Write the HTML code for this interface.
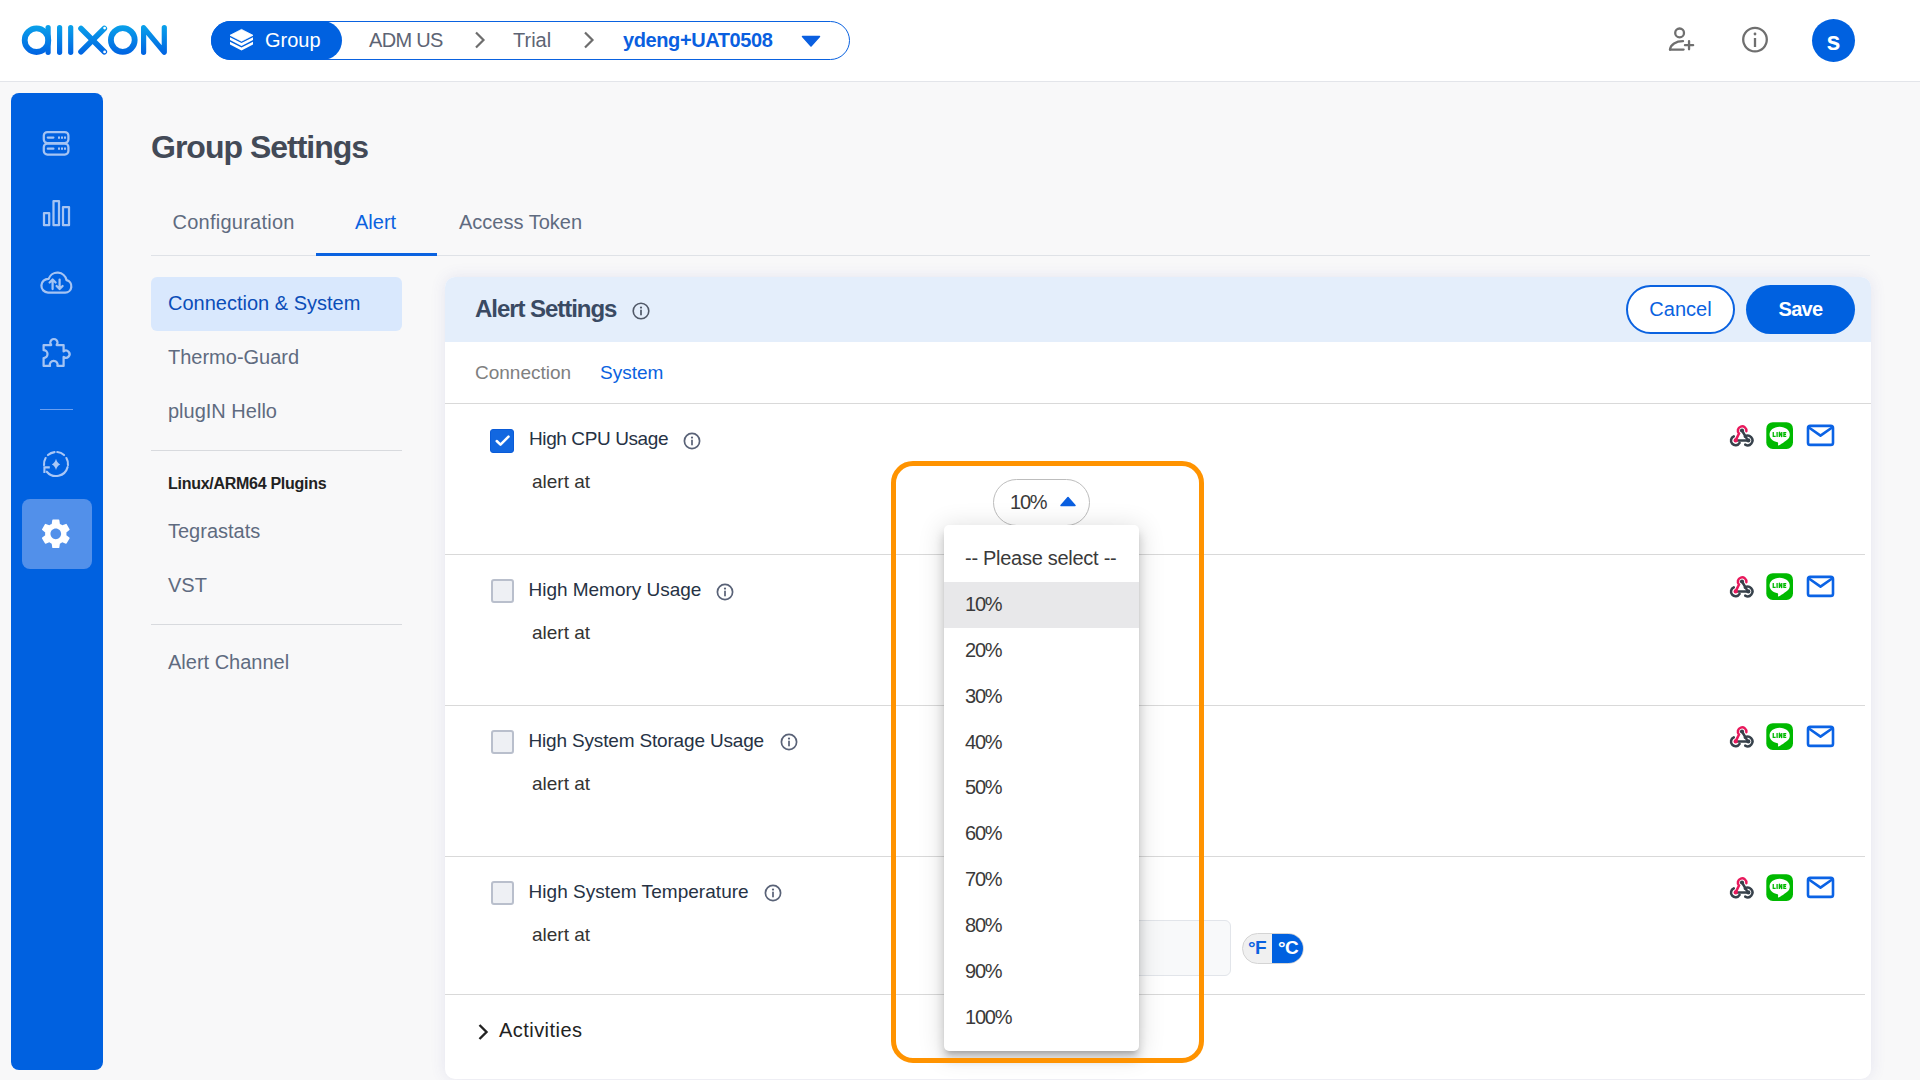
<!DOCTYPE html>
<html><head><meta charset="utf-8">
<style>
*{box-sizing:border-box;margin:0;padding:0}
html,body{width:1920px;height:1080px;overflow:hidden;background:#f8f8f9;font-family:"Liberation Sans",sans-serif;color:#333}
.a{position:absolute;white-space:nowrap}
.hdr{position:absolute;left:0;top:0;width:1920px;height:82px;background:#fff;border-bottom:1px solid #e3e5ea}
.crumb{position:absolute;left:211px;top:21px;width:639px;height:39px;border:1.5px solid #0a62e0;border-radius:20px;background:#fff}
.grp{position:absolute;left:211px;top:21px;width:131px;height:39px;background:#0061e0;border-radius:20px}
.t20{font-size:20px;line-height:24px}
.side{position:absolute;left:11px;top:93px;width:92px;height:977px;background:#0061e0;border-radius:8px}
.card{position:absolute;left:445px;top:277px;width:1426px;height:802px;background:#fff;border-radius:10px;box-shadow:0 0 16px rgba(70,70,160,.11)}
.chd{position:absolute;left:445px;top:277px;width:1426px;height:65px;background:#e4eefb;border-radius:10px 10px 0 0}
.sep{position:absolute;left:445px;width:1420px;height:1px;background:#d9d9d9}
.nav{font-size:20px;line-height:24px;color:#5f6b80}
.ttl{font-size:19px;line-height:24px;color:#263244;letter-spacing:-0.4px}
.alat{font-size:19px;line-height:24px;color:#333;margin-top:1px}
.cb{position:absolute;left:491px;width:23px;height:24px;border-radius:3px;background:#eef0f4;border:2px solid #b9bfcc}
.menu{position:absolute;left:944px;top:525px;width:195px;height:526px;background:#fff;border-radius:5px;box-shadow:0 5px 5px -3px rgba(0,0,0,.2),0 8px 10px 1px rgba(0,0,0,.14),0 3px 24px 3px rgba(0,0,0,.12)}
.mi{position:absolute;left:21px;font-size:20px;line-height:24px;color:#3a3a3a;letter-spacing:-0.28px}
</style></head><body>
<!-- header -->
<div class="hdr"></div>
<svg class="a" style="left:0;top:0" width="180" height="82" viewBox="0 0 180 82">
<defs><linearGradient id="lg" x1="0" y1="25" x2="0" y2="55" gradientUnits="userSpaceOnUse"><stop offset="0" stop-color="#0aa2ea"/><stop offset="1" stop-color="#0062e2"/></linearGradient></defs>
<g fill="none" stroke="url(#lg)" stroke-linecap="round">
<circle cx="36.5" cy="40.2" r="11.8" stroke-width="5.8"/>
<line x1="48.1" y1="27.6" x2="48.1" y2="52.3" stroke-width="5.2"/>
<line x1="59.6" y1="27.6" x2="59.6" y2="52.3" stroke-width="5.2"/>
<line x1="70.7" y1="27.6" x2="70.7" y2="52.3" stroke-width="5.2"/>
<line x1="81" y1="28.5" x2="104.3" y2="51.8" stroke-width="5.6"/>
<line x1="81" y1="51.8" x2="104.3" y2="28.5" stroke-width="5.6"/>
<circle cx="122.8" cy="40" r="11.9" stroke-width="5.8"/>
<path d="M143.6 52.3V27.6L164.3 52.3V27.6" stroke-width="5.2" stroke-linejoin="round"/>
</g>
<circle cx="104.6" cy="28.1" r="1.4" fill="#fff"/><circle cx="104.6" cy="51.9" r="1.4" fill="#fff"/>
</svg>
<div class="crumb"></div>
<div class="grp"></div>
<svg class="a" style="left:228px;top:28px" width="26" height="24" viewBox="0 0 26 24">
<path d="M13.5 1.4L25 7.3L13.5 13.2L2 7.3Z" fill="#fff" stroke="#fff" stroke-width="0.8" stroke-linejoin="round"/>
<path d="M2 9.2L13.5 15.1L25 9.2V12L13.5 17.9L2 12Z" fill="#fff"/>
<path d="M2 13.7L13.5 19.6L25 13.7V16.5L13.5 22.4L2 16.5Z" fill="#fff"/>
</svg>
<div class="a t20" style="left:265px;top:28px;color:#fff">Group</div>
<div class="a t20" style="left:369px;top:28px;color:#5d6474;letter-spacing:-0.7px">ADM US</div>
<svg class="a" style="left:473px;top:30px" width="14" height="20"><path d="M3 2.5L10.5 10L3 17.5" fill="none" stroke="#6d6d6d" stroke-width="2.2"/></svg>
<div class="a t20" style="left:513px;top:28px;color:#5d6474">Trial</div>
<svg class="a" style="left:582px;top:30px" width="14" height="20"><path d="M3 2.5L10.5 10L3 17.5" fill="none" stroke="#6d6d6d" stroke-width="2.2"/></svg>
<div class="a t20" style="left:623px;top:28px;color:#0a5fe0;font-weight:bold;letter-spacing:-0.4px">ydeng+UAT0508</div>
<svg class="a" style="left:800px;top:34px" width="22" height="14"><path d="M2.5 2.5H19.5L11 12Z" fill="#0a5fe0" stroke="#0a5fe0" stroke-width="1.5" stroke-linejoin="round"/></svg>
<!-- right header icons -->
<svg class="a" style="left:1666px;top:25px" width="32" height="30" viewBox="0 0 32 30">
<g fill="none" stroke="#6f6f6f" stroke-width="2.3" stroke-linecap="round">
<circle cx="13.6" cy="7.9" r="4.4"/>
<path d="M4 24.6C4.5 19.3 10 16.2 17 16.2"/>
<path d="M4 24.6H17.6"/>
<path d="M23.05 16.1V24.3M18.95 20.2H27.15"/>
</g></svg>
<svg class="a" style="left:1741px;top:26px" width="28" height="28" viewBox="0 0 28 28">
<circle cx="14" cy="13.6" r="11.8" fill="none" stroke="#6f6f6f" stroke-width="2.3"/>
<circle cx="14" cy="8" r="1.4" fill="#6f6f6f"/>
<line x1="14" y1="12" x2="14" y2="21" stroke="#6f6f6f" stroke-width="2.3"/>
</svg>
<div class="a" style="left:1812px;top:19px;width:43px;height:43px;border-radius:50%;background:#0061e0"></div>
<div class="a" style="left:1812px;top:20px;width:43px;line-height:43px;text-align:center;color:#fff;font-weight:bold;font-size:25px">s</div>

<!-- sidebar -->
<div class="side"></div>
<svg class="a" style="left:0;top:0" width="110" height="600" viewBox="0 0 110 600">
<g fill="none" stroke="#a5c4f3" stroke-width="2.25" stroke-linecap="round" stroke-linejoin="round">
<rect x="43.8" y="132" width="24.6" height="11" rx="3.6"/>
<rect x="43.8" y="143.5" width="24.6" height="11" rx="3.6"/>
<path d="M47.8 137.6H53.4M47.8 148.7H53.4"/>
<path d="M58 137.6H60M61 137.6H63M64 137.6H66M58 148.7H60M61 148.7H63M64 148.7H66" stroke-linecap="butt"/>
<rect x="44" y="213" width="5.2" height="12.2"/>
<rect x="53.5" y="201" width="5.5" height="24.2"/>
<rect x="63" y="207" width="6" height="18.2"/>
<path d="M48 292.6H65.2A6.3 6.3 0 0 0 66.6 280.2A9.4 9.4 0 0 0 48.6 278.8A6.9 6.9 0 0 0 48 292.6Z"/>
<path d="M52.6 289V279.5M49.6 282.5L52.6 279.5L55.6 282.5"/>
<path d="M59.6 279.5V289M56.6 286L59.6 289L62.6 286"/>
<path d="M43.6 345H51.2A3.6 3.6 0 1 1 56.6 345H63.6V351.4A3.6 3.6 0 1 1 63.6 356.9V365.9H57.4A3.9 3.9 0 1 0 50 365.9H43.6V358A3.2 3.2 0 1 0 43.6 350.2Z"/>
</g>
<line x1="40" y1="409.5" x2="73" y2="409.5" stroke="#6a9ff0" stroke-width="1"/>
<g fill="none" stroke="#a9c7f6" stroke-width="2.1" stroke-linecap="round" stroke-linejoin="round">
<path d="M44.05 465.05A12 12 0 0 1 45.61 458M47.97 455.08A12 12 0 0 1 54.54 452.09M57.25 452.07A12 12 0 0 1 64.03 455.08M66.39 458A12 12 0 0 1 67.95 465.05"/>
<path d="M67.59 467.11A12 12 0 0 1 46.81 471.71"/>
<path d="M49.8 467.4H44.4V472.9" stroke-linecap="butt" stroke-linejoin="miter"/>
</g>
<path d="M56 458.8Q57.2 463.2 60.2 464.4Q57.2 465.6 56 470Q54.8 465.6 51.8 464.4Q54.8 463.2 56 458.8Z" fill="#a9c7f6"/>
</svg>
<div class="a" style="left:22px;top:499px;width:70px;height:70px;border-radius:8px;background:#5290ea"></div>
<svg class="a" style="left:38px;top:516px" width="35.6" height="35.6" viewBox="0 0 24 24">
<path fill="#fff" d="M19.14 12.94c.04-.3.06-.61.06-.94 0-.32-.02-.64-.07-.94l2.03-1.58a.49.49 0 0 0 .12-.61l-1.92-3.32a.49.49 0 0 0-.59-.22l-2.39.96c-.5-.38-1.03-.7-1.62-.94l-.36-2.54a.48.48 0 0 0-.48-.41h-3.84c-.24 0-.43.17-.47.41l-.36 2.54c-.59.24-1.13.57-1.62.94l-2.39-.96a.48.48 0 0 0-.59.22L2.74 8.87c-.12.21-.08.47.12.61l2.03 1.58c-.05.3-.09.63-.09.94s.02.64.07.94l-2.03 1.58a.49.49 0 0 0-.12.61l1.92 3.32c.12.22.37.29.59.22l2.39-.96c.5.38 1.03.7 1.62.94l.36 2.54c.05.24.24.41.48.41h3.84c.24 0 .44-.17.47-.41l.36-2.54c.59-.24 1.13-.56 1.62-.94l2.39.96c.22.08.47 0 .59-.22l1.92-3.32c.12-.22.07-.47-.12-.61l-2.01-1.58zM12 15.6c-1.98 0-3.6-1.62-3.6-3.6s1.62-3.6 3.6-3.6 3.6 1.62 3.6 3.6-1.62 3.6-3.6 3.6z"/>
</svg>

<!-- title -->
<div class="a" style="left:151px;top:127px;font-size:32px;line-height:40px;font-weight:bold;color:#434a57;letter-spacing:-1px">Group Settings</div>
<div class="a nav" style="left:172.5px;top:210px;letter-spacing:0.25px">Configuration</div>
<div class="a nav" style="left:355px;top:210px;color:#0a62e0">Alert</div>
<div class="a nav" style="left:459px;top:210px">Access Token</div>
<div class="a" style="left:151px;top:255px;width:1719px;height:1px;background:#dfe2e7"></div>
<div class="a" style="left:316px;top:253px;width:121px;height:3px;background:#0a62e0"></div>

<!-- left nav -->
<div class="a" style="left:151px;top:277px;width:251px;height:54px;border-radius:6px;background:#d9e8fd"></div>
<div class="a nav" style="left:168px;top:291px;color:#0b4db8">Connection &amp; System</div>
<div class="a nav" style="left:168px;top:345px">Thermo-Guard</div>
<div class="a nav" style="left:168px;top:399px">plugIN Hello</div>
<div class="a" style="left:151px;top:450px;width:251px;height:1px;background:#d8dade"></div>
<div class="a" style="left:168px;top:475px;font-size:16px;line-height:18px;font-weight:bold;color:#222;letter-spacing:-0.28px">Linux/ARM64 Plugins</div>
<div class="a nav" style="left:168px;top:519px">Tegrastats</div>
<div class="a nav" style="left:168px;top:573px">VST</div>
<div class="a" style="left:151px;top:624px;width:251px;height:1px;background:#d8dade"></div>
<div class="a nav" style="left:168px;top:650px">Alert Channel</div>

<!-- card -->
<div class="card"></div>
<div class="chd"></div>
<div class="a" style="left:475px;top:295px;font-size:24px;line-height:28px;font-weight:bold;color:#3a4a63;letter-spacing:-1.05px">Alert Settings</div>
<div class="a" style="left:1626px;top:285px;width:109px;height:49px;border:2px solid #0a62e0;border-radius:25px;background:#fff;color:#0a62e0;font-size:20px;line-height:45px;text-align:center">Cancel</div>
<div class="a" style="left:1746px;top:285px;width:109px;height:49px;border-radius:25px;background:#0061e0;color:#fff;font-size:20px;line-height:49px;text-align:center;font-weight:bold;letter-spacing:-0.7px">Save</div>
<div class="a" style="left:475px;top:361px;font-size:19px;line-height:24px;color:#808080">Connection</div>
<div class="a" style="left:600px;top:361px;font-size:19px;line-height:24px;color:#0a62e0">System</div>
<div class="sep" style="top:403px;width:1426px"></div>
<div class="sep" style="top:554px"></div>
<div class="sep" style="top:705px"></div>
<div class="sep" style="top:856px"></div>
<div class="sep" style="top:994px"></div>

<!-- rows -->
<div class="a" style="left:490px;top:429px;width:24px;height:24px;border-radius:3px;background:#1267e0;border:1px solid #0a5bd8"></div>
<svg class="a" style="left:490px;top:429px" width="24" height="24"><path d="M6.7 12L10.5 15.7L18.5 7.7" fill="none" stroke="#fff" stroke-width="2.5" stroke-linecap="round" stroke-linejoin="round"/></svg>
<div class="a ttl" style="left:529px;top:427px">High CPU Usage</div>
<div class="a alat" style="left:532px;top:469px">alert at</div>

<div class="cb" style="top:579px"></div>
<div class="a ttl" style="left:528.5px;top:578px;letter-spacing:-0.02px">High Memory Usage</div>
<div class="a alat" style="left:532px;top:620px">alert at</div>

<div class="cb" style="top:730px"></div>
<div class="a ttl" style="left:528.5px;top:729px;letter-spacing:-0.17px">High System Storage Usage</div>
<div class="a alat" style="left:532px;top:771px">alert at</div>

<div class="cb" style="top:881px"></div>
<div class="a ttl" style="left:528.5px;top:880px;letter-spacing:0.04px">High System Temperature</div>
<div class="a alat" style="left:532px;top:922px">alert at</div>

<svg class="a" style="left:476px;top:1022px" width="14" height="20"><path d="M3.5 3L10.5 10L3.5 17" fill="none" stroke="#222" stroke-width="2.4"/></svg>
<div class="a" style="left:499px;top:1018px;font-size:20px;line-height:24px;color:#222;letter-spacing:0.45px">Activities</div>

<svg class="a" style="left:631px;top:301px" width="20" height="20" viewBox="0 0 20 20"><circle cx="10" cy="10" r="7.8" fill="none" stroke="#505867" stroke-width="1.6"/><circle cx="10" cy="6.6" r="1.1" fill="#505867"/><rect x="9.15" y="8.7" width="1.7" height="5.6" fill="#505867"/></svg><svg class="a" style="left:682px;top:430.5px" width="20" height="20" viewBox="0 0 20 20"><circle cx="10" cy="10" r="7.6" fill="none" stroke="#596277" stroke-width="1.7"/><circle cx="10" cy="6.6" r="1.1" fill="#596277"/><rect x="9.15" y="8.7" width="1.7" height="5.6" fill="#596277"/></svg><svg class="a" style="left:715px;top:582px" width="20" height="20" viewBox="0 0 20 20"><circle cx="10" cy="10" r="7.6" fill="none" stroke="#596277" stroke-width="1.7"/><circle cx="10" cy="6.6" r="1.1" fill="#596277"/><rect x="9.15" y="8.7" width="1.7" height="5.6" fill="#596277"/></svg><svg class="a" style="left:779px;top:732px" width="20" height="20" viewBox="0 0 20 20"><circle cx="10" cy="10" r="7.6" fill="none" stroke="#596277" stroke-width="1.7"/><circle cx="10" cy="6.6" r="1.1" fill="#596277"/><rect x="9.15" y="8.7" width="1.7" height="5.6" fill="#596277"/></svg><svg class="a" style="left:763px;top:882.5px" width="20" height="20" viewBox="0 0 20 20"><circle cx="10" cy="10" r="7.6" fill="none" stroke="#596277" stroke-width="1.7"/><circle cx="10" cy="6.6" r="1.1" fill="#596277"/><rect x="9.15" y="8.7" width="1.7" height="5.6" fill="#596277"/></svg>
<svg class="a" style="left:1726px;top:420px" width="112" height="32" viewBox="0 0 112 32">
<g fill="none" stroke-width="2.5" stroke-linecap="round">
<path d="M16 10.5L20.8 18.6" stroke="#37414b"/>
<path d="M9.7 20.4H22.3" stroke="#37414b"/>
<path d="M18.85 16.57A4.8 4.8 0 1 1 19.2 24.66" stroke="#37414b"/>
<path d="M7.8 16.4A4.6 4.6 0 1 0 13.6 22.9" stroke="#37414b"/>
<path d="M20.4 11.2A4.3 4.3 0 1 0 13 13.6L9.7 20.4" stroke="#e8195c"/>
</g>
<circle cx="16" cy="10.5" r="2.1" fill="#37414b"/>
<circle cx="9.7" cy="20.4" r="2.1" fill="#e8195c"/>
<circle cx="22.3" cy="20.4" r="2.1" fill="#37414b"/>
<rect x="40.3" y="2.2" width="26.7" height="26.7" rx="6.5" fill="#00b900"/>
<path transform="translate(53.6 14.6) scale(1.07) translate(-53.6 -14.6)" d="M53.6 7.2C47.9 7.2 44.2 10.6 44.2 14.6C44.2 18.3 47.3 21.1 51.8 21.8C52.5 22 52.2 23.5 52.1 24.2C52 24.8 52.4 25 53.1 24.6C55.5 23.2 61 19.6 62.4 17.5C63 16.6 63.1 15.6 63.1 14.6C63.1 10.6 59.3 7.2 53.6 7.2Z" fill="#fff"/>
<path d="M47.25 11.9V16.35H49.7M51.1 11.9V17M53.35 17V11.9L55.75 17V11.9M60.3 12.55H57.9V16.35H60.3M57.9 14.45H60" fill="none" stroke="#00b900" stroke-width="1.3"/>
<rect x="82" y="5.9" width="25" height="19" rx="2.2" fill="none" stroke="#0b63e5" stroke-width="2.6"/>
<path d="M82.5 7.2L94.5 15.6L106.5 7.2" fill="none" stroke="#0b63e5" stroke-width="2.6" stroke-linejoin="round"/>
</svg><svg class="a" style="left:1726px;top:571px" width="112" height="32" viewBox="0 0 112 32">
<g fill="none" stroke-width="2.5" stroke-linecap="round">
<path d="M16 10.5L20.8 18.6" stroke="#37414b"/>
<path d="M9.7 20.4H22.3" stroke="#37414b"/>
<path d="M18.85 16.57A4.8 4.8 0 1 1 19.2 24.66" stroke="#37414b"/>
<path d="M7.8 16.4A4.6 4.6 0 1 0 13.6 22.9" stroke="#37414b"/>
<path d="M20.4 11.2A4.3 4.3 0 1 0 13 13.6L9.7 20.4" stroke="#e8195c"/>
</g>
<circle cx="16" cy="10.5" r="2.1" fill="#37414b"/>
<circle cx="9.7" cy="20.4" r="2.1" fill="#e8195c"/>
<circle cx="22.3" cy="20.4" r="2.1" fill="#37414b"/>
<rect x="40.3" y="2.2" width="26.7" height="26.7" rx="6.5" fill="#00b900"/>
<path transform="translate(53.6 14.6) scale(1.07) translate(-53.6 -14.6)" d="M53.6 7.2C47.9 7.2 44.2 10.6 44.2 14.6C44.2 18.3 47.3 21.1 51.8 21.8C52.5 22 52.2 23.5 52.1 24.2C52 24.8 52.4 25 53.1 24.6C55.5 23.2 61 19.6 62.4 17.5C63 16.6 63.1 15.6 63.1 14.6C63.1 10.6 59.3 7.2 53.6 7.2Z" fill="#fff"/>
<path d="M47.25 11.9V16.35H49.7M51.1 11.9V17M53.35 17V11.9L55.75 17V11.9M60.3 12.55H57.9V16.35H60.3M57.9 14.45H60" fill="none" stroke="#00b900" stroke-width="1.3"/>
<rect x="82" y="5.9" width="25" height="19" rx="2.2" fill="none" stroke="#0b63e5" stroke-width="2.6"/>
<path d="M82.5 7.2L94.5 15.6L106.5 7.2" fill="none" stroke="#0b63e5" stroke-width="2.6" stroke-linejoin="round"/>
</svg><svg class="a" style="left:1726px;top:721px" width="112" height="32" viewBox="0 0 112 32">
<g fill="none" stroke-width="2.5" stroke-linecap="round">
<path d="M16 10.5L20.8 18.6" stroke="#37414b"/>
<path d="M9.7 20.4H22.3" stroke="#37414b"/>
<path d="M18.85 16.57A4.8 4.8 0 1 1 19.2 24.66" stroke="#37414b"/>
<path d="M7.8 16.4A4.6 4.6 0 1 0 13.6 22.9" stroke="#37414b"/>
<path d="M20.4 11.2A4.3 4.3 0 1 0 13 13.6L9.7 20.4" stroke="#e8195c"/>
</g>
<circle cx="16" cy="10.5" r="2.1" fill="#37414b"/>
<circle cx="9.7" cy="20.4" r="2.1" fill="#e8195c"/>
<circle cx="22.3" cy="20.4" r="2.1" fill="#37414b"/>
<rect x="40.3" y="2.2" width="26.7" height="26.7" rx="6.5" fill="#00b900"/>
<path transform="translate(53.6 14.6) scale(1.07) translate(-53.6 -14.6)" d="M53.6 7.2C47.9 7.2 44.2 10.6 44.2 14.6C44.2 18.3 47.3 21.1 51.8 21.8C52.5 22 52.2 23.5 52.1 24.2C52 24.8 52.4 25 53.1 24.6C55.5 23.2 61 19.6 62.4 17.5C63 16.6 63.1 15.6 63.1 14.6C63.1 10.6 59.3 7.2 53.6 7.2Z" fill="#fff"/>
<path d="M47.25 11.9V16.35H49.7M51.1 11.9V17M53.35 17V11.9L55.75 17V11.9M60.3 12.55H57.9V16.35H60.3M57.9 14.45H60" fill="none" stroke="#00b900" stroke-width="1.3"/>
<rect x="82" y="5.9" width="25" height="19" rx="2.2" fill="none" stroke="#0b63e5" stroke-width="2.6"/>
<path d="M82.5 7.2L94.5 15.6L106.5 7.2" fill="none" stroke="#0b63e5" stroke-width="2.6" stroke-linejoin="round"/>
</svg><svg class="a" style="left:1726px;top:872px" width="112" height="32" viewBox="0 0 112 32">
<g fill="none" stroke-width="2.5" stroke-linecap="round">
<path d="M16 10.5L20.8 18.6" stroke="#37414b"/>
<path d="M9.7 20.4H22.3" stroke="#37414b"/>
<path d="M18.85 16.57A4.8 4.8 0 1 1 19.2 24.66" stroke="#37414b"/>
<path d="M7.8 16.4A4.6 4.6 0 1 0 13.6 22.9" stroke="#37414b"/>
<path d="M20.4 11.2A4.3 4.3 0 1 0 13 13.6L9.7 20.4" stroke="#e8195c"/>
</g>
<circle cx="16" cy="10.5" r="2.1" fill="#37414b"/>
<circle cx="9.7" cy="20.4" r="2.1" fill="#e8195c"/>
<circle cx="22.3" cy="20.4" r="2.1" fill="#37414b"/>
<rect x="40.3" y="2.2" width="26.7" height="26.7" rx="6.5" fill="#00b900"/>
<path transform="translate(53.6 14.6) scale(1.07) translate(-53.6 -14.6)" d="M53.6 7.2C47.9 7.2 44.2 10.6 44.2 14.6C44.2 18.3 47.3 21.1 51.8 21.8C52.5 22 52.2 23.5 52.1 24.2C52 24.8 52.4 25 53.1 24.6C55.5 23.2 61 19.6 62.4 17.5C63 16.6 63.1 15.6 63.1 14.6C63.1 10.6 59.3 7.2 53.6 7.2Z" fill="#fff"/>
<path d="M47.25 11.9V16.35H49.7M51.1 11.9V17M53.35 17V11.9L55.75 17V11.9M60.3 12.55H57.9V16.35H60.3M57.9 14.45H60" fill="none" stroke="#00b900" stroke-width="1.3"/>
<rect x="82" y="5.9" width="25" height="19" rx="2.2" fill="none" stroke="#0b63e5" stroke-width="2.6"/>
<path d="M82.5 7.2L94.5 15.6L106.5 7.2" fill="none" stroke="#0b63e5" stroke-width="2.6" stroke-linejoin="round"/>
</svg>
<!-- temperature input + toggle -->
<div class="a" style="left:993px;top:920px;width:238px;height:56px;border:1px solid #e2e5ea;border-radius:6px;background:#f8f9fa"></div>
<div class="a" style="left:1242px;top:933px;width:62px;height:31px;border-radius:16px;background:#f0f0f0;border:1px solid #d4d4d4;overflow:hidden">
 <div class="a" style="left:29px;top:-1px;width:33px;height:31px;background:#0061e0"></div>
</div>
<div class="a" style="left:1248px;top:936px;font-size:19px;line-height:24px;color:#0a62e0;font-weight:bold;letter-spacing:-0.5px">°F</div>
<div class="a" style="left:1278px;top:936px;font-size:19px;line-height:24px;color:#fff;font-weight:bold;letter-spacing:-0.5px">°C</div>

<!-- dropdown -->
<div class="a" style="left:993px;top:479px;width:97px;height:47px;border:1px solid #bdbdbd;border-radius:24px;background:#fff"></div>
<div class="a" style="left:1010px;top:490px;font-size:20px;line-height:24px;color:#3a3a3a;letter-spacing:-1.2px">10%</div>
<svg class="a" style="left:1058px;top:494px" width="20" height="14"><path d="M3 11.5H17L10 3.5Z" fill="#0a5fe0" stroke="#0a5fe0" stroke-width="1.5" stroke-linejoin="round"/></svg>
<div class="menu">
 <div class="a" style="left:0;top:57px;width:195px;height:46px;background:#e8e8ea"></div>
 <div class="mi" style="top:21px">-- Please select --</div>
 <div class="mi" style="top:67px;letter-spacing:-1.2px">10%</div>
 <div class="mi" style="top:113px;letter-spacing:-1.2px">20%</div>
 <div class="mi" style="top:159px;letter-spacing:-1.2px">30%</div>
 <div class="mi" style="top:205px;letter-spacing:-1.2px">40%</div>
 <div class="mi" style="top:250px;letter-spacing:-1.2px">50%</div>
 <div class="mi" style="top:296px;letter-spacing:-1.2px">60%</div>
 <div class="mi" style="top:342px;letter-spacing:-1.2px">70%</div>
 <div class="mi" style="top:388px;letter-spacing:-1.2px">80%</div>
 <div class="mi" style="top:434px;letter-spacing:-1.2px">90%</div>
 <div class="mi" style="top:480px;letter-spacing:-1.2px">100%</div>
</div>
<div class="a" style="left:891px;top:461px;width:313px;height:602px;border:5px solid #ff9300;border-radius:22px"></div>
</body></html>
